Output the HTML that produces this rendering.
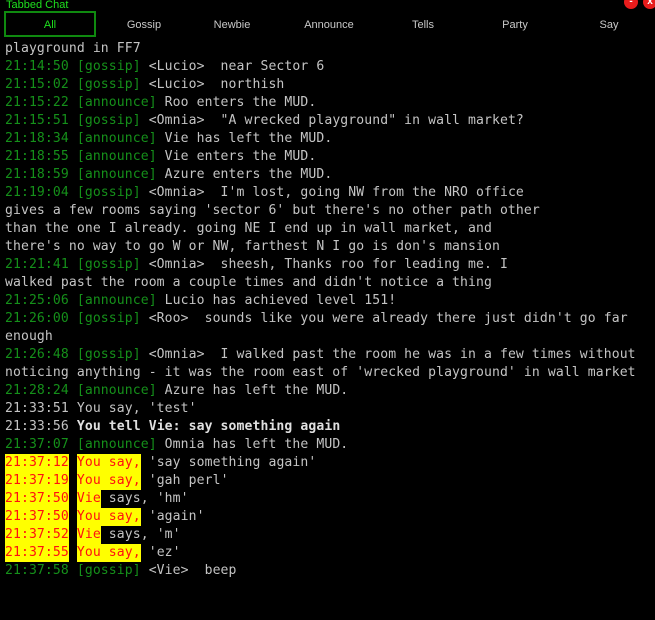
<!DOCTYPE html>
<html><head><meta charset="utf-8"><style>
html,body{margin:0;padding:0;background:#000;width:655px;height:620px;overflow:hidden;position:relative}
.title{position:absolute;left:6px;top:-1px;font:11px "Liberation Sans",sans-serif;color:#1ee01e}
.btn{position:absolute;top:-5px;width:14px;height:14px;border-radius:50%;background:#e81c1c;color:#fff;font:bold 10px "Liberation Sans",sans-serif;text-align:center;line-height:14px}
.tab{position:absolute;top:11px;height:26px;font:11px "Liberation Sans",sans-serif;line-height:28px;color:#c8c8c8;text-align:center;width:92px}
.sel{box-sizing:border-box;border:2px solid #0f8a0f;color:#1ee01e;line-height:24px;left:4px}
.log{position:absolute;left:5px;top:40px;font:13.1px "DejaVu Sans Mono",monospace;letter-spacing:0.1px;line-height:18px;color:#c4c4c4;white-space:pre}
.g{color:#15901a}
.y{background:#ffff00;color:#ff1010;display:inline-block;height:18px;vertical-align:top}
b{color:#e0e0e0}
</style></head><body>
<div class="title">Tabbed Chat</div>
<div class="btn" style="left:624px">-</div>
<div class="btn" style="left:643px">x</div>
<div class="tab sel">All</div>
<div class="tab" style="left:98px">Gossip</div>
<div class="tab" style="left:186px">Newbie</div>
<div class="tab" style="left:283px">Announce</div>
<div class="tab" style="left:377px">Tells</div>
<div class="tab" style="left:469px">Party</div>
<div class="tab" style="left:563px">Say</div>
<div class="log">playground in FF7
<span class="g">21:14:50 [gossip]</span> &lt;Lucio&gt;  near Sector 6
<span class="g">21:15:02 [gossip]</span> &lt;Lucio&gt;  northish
<span class="g">21:15:22 [announce]</span> Roo enters the MUD.
<span class="g">21:15:51 [gossip]</span> &lt;Omnia&gt;  "A wrecked playground" in wall market?
<span class="g">21:18:34 [announce]</span> Vie has left the MUD.
<span class="g">21:18:55 [announce]</span> Vie enters the MUD.
<span class="g">21:18:59 [announce]</span> Azure enters the MUD.
<span class="g">21:19:04 [gossip]</span> &lt;Omnia&gt;  I'm lost, going NW from the NRO office
gives a few rooms saying 'sector 6' but there's no other path other
than the one I already. going NE I end up in wall market, and
there's no way to go W or NW, farthest N I go is don's mansion
<span class="g">21:21:41 [gossip]</span> &lt;Omnia&gt;  sheesh, Thanks roo for leading me. I
walked past the room a couple times and didn't notice a thing
<span class="g">21:25:06 [announce]</span> Lucio has achieved level 151!
<span class="g">21:26:00 [gossip]</span> &lt;Roo&gt;  sounds like you were already there just didn't go far
enough
<span class="g">21:26:48 [gossip]</span> &lt;Omnia&gt;  I walked past the room he was in a few times without
noticing anything - it was the room east of 'wrecked playground' in wall market
<span class="g">21:28:24 [announce]</span> Azure has left the MUD.
21:33:51 You say, 'test'
21:33:56 <b>You tell Vie: say something again</b>
<span class="g">21:37:07 [announce]</span> Omnia has left the MUD.
<span class="y">21:37:12</span> <span class="y">You say,</span> 'say something again'
<span class="y">21:37:19</span> <span class="y">You say,</span> 'gah perl'
<span class="y">21:37:50</span> <span class="y">Vie</span> says, 'hm'
<span class="y">21:37:50</span> <span class="y">You say,</span> 'again'
<span class="y">21:37:52</span> <span class="y">Vie</span> says, 'm'
<span class="y">21:37:55</span> <span class="y">You say,</span> 'ez'
<span class="g">21:37:58 [gossip]</span> &lt;Vie&gt;  beep</div>
</body></html>
